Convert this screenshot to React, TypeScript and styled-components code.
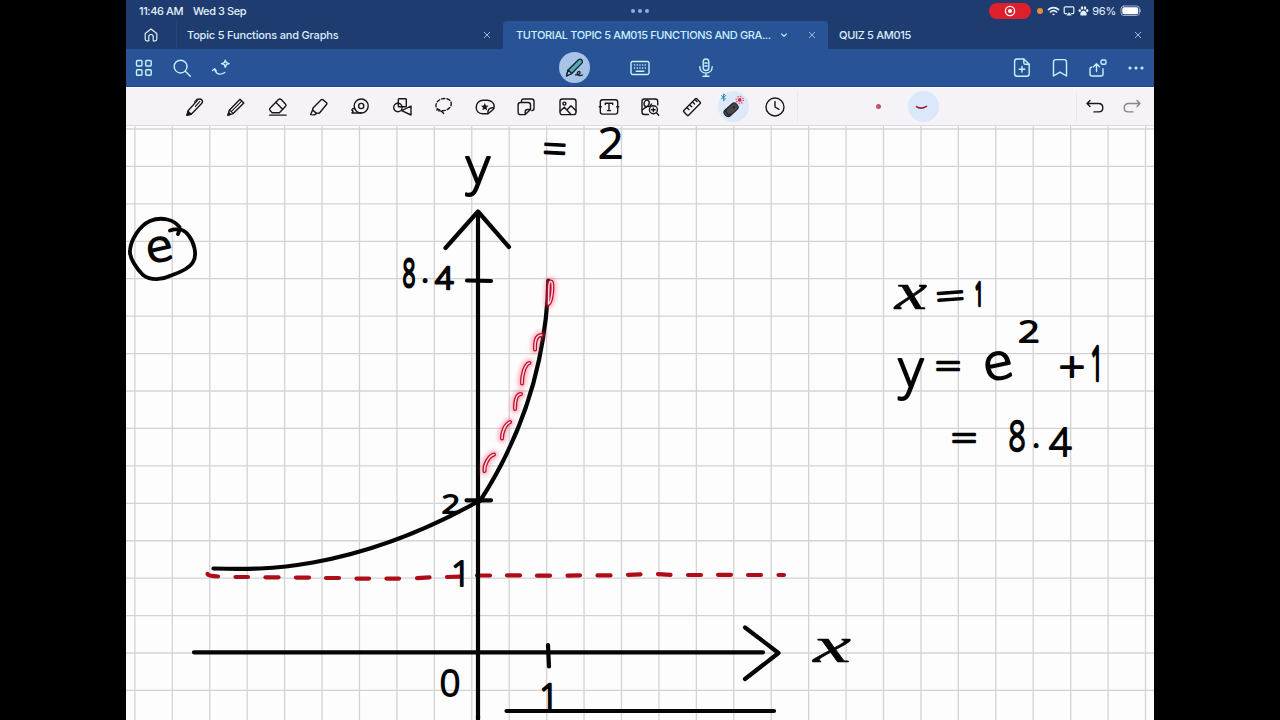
import React from "react";
import styled, { createGlobalStyle } from "styled-components";

const GlobalStyle = createGlobalStyle`
  * { box-sizing: border-box; }
  body { margin: 0; background: #000; overflow: hidden; }
`;

const Page = styled.div`
  height: 720px;
  background: #000;
  display: flex;
  justify-content: center;
  font-family: Inter, "Liberation Sans", sans-serif;
`;

const Tablet = styled.div`
  width: 1028px;
  height: 720px;
  display: flex;
  flex-direction: column;
  background: #fdfdfe;
`;

const StatusBar = styled.header`
  height: 21px;
  flex: none;
  background: #1f3c70;
  color: #e4f1fc;
  display: grid;
  grid-template-columns: 1fr auto 1fr;
  align-items: center;
  padding: 0 13px;
  font-size: 11px;
  font-weight: 500;
`;

const Clock = styled.div`
  display: flex;
  gap: 10px;
  white-space: nowrap;
  letter-spacing: -0.42px;
`;

const Dots = styled.div`
  display: flex;
  gap: 3px;
`;

const Dot = styled.span<{ $size: number; $color: string }>`
  width: ${(p) => p.$size}px;
  height: ${(p) => p.$size}px;
  border-radius: 50%;
  background: ${(p) => p.$color};
`;

const StatusIcons = styled.div`
  display: flex;
  align-items: center;
  justify-content: flex-end;
  font-weight: 400;
`;

const Percent = styled.span`
  letter-spacing: -0.2px;
`;

const RecordPill = styled.div`
  width: 42px;
  height: 16px;
  border-radius: 8px;
  background: #de1f2c;
  display: flex;
  align-items: center;
  justify-content: center;
  margin-right: 6px;
`;

const TabBar = styled.nav`
  height: 28px;
  flex: none;
  background: #1f3c70;
  display: flex;
  color: #dbeefb;
`;

const HomeTab = styled.div`
  width: 51px;
  padding-right: 1px;
  border-right: 1px solid #27457a;
  display: flex;
  align-items: center;
  justify-content: center;
`;

const Tab = styled.div<{ $width: number; $active?: boolean }>`
  width: ${(p) => p.$width}px;
  display: flex;
  align-items: center;
  padding: 0 12px 0 ${(p) => (p.$active ? 13 : 10)}px;
  border-radius: 4px 4px 0 0;
  background: ${(p) => (p.$active ? "#285397" : "transparent")};
  color: ${(p) => (p.$active ? "#c9f0fd" : "inherit")};
  font-size: 11px;
  font-weight: 500;
`;

const TabTitle = styled.span<{ $tracking: number; $indent?: number }>`
  white-space: nowrap;
  margin-left: ${(p) => p.$indent ?? 0}px;
  margin-right: auto;
  letter-spacing: ${(p) => p.$tracking}px;
`;

const TabActions = styled.div`
  display: flex;
  gap: 20px;
`;

const NavBar = styled.div`
  height: 38px;
  flex: none;
  background: #285397;
  border-bottom: 1px solid #1f4380;
  display: grid;
  grid-template-columns: 1fr auto 1fr;
  align-items: center;
  color: #c9f0fd;
`;

const NavGroup = styled.div<{ $gap: number; $end?: boolean }>`
  display: flex;
  align-items: center;
  gap: ${(p) => p.$gap}px;
  justify-content: ${(p) => (p.$end ? "flex-end" : "flex-start")};
  padding: ${(p) => (p.$end ? "0 7px 0 0" : "0 0 0 7px")};
`;

const ModeGroup = styled.div`
  display: flex;
  align-items: center;
  gap: 34.5px;
`;

const RoundButton = styled.div<{ $color?: string }>`
  width: 31px;
  height: 31px;
  border-radius: 50%;
  background: ${(p) => p.$color ?? "transparent"};
  display: flex;
  align-items: center;
  justify-content: center;
`;

const ToolBar = styled.div`
  height: 39px;
  flex: none;
  background: #f5f3f8;
  border-top: 1px solid #fdfdff;
  border-bottom: 1px solid #dcdbe0;
  display: flex;
  align-items: center;
  color: #17171a;
`;

const ToolList = styled.div`
  display: flex;
  padding-left: 48px;
  width: 671px;
`;

const Tool = styled.div`
  width: 41.43px;
  flex: none;
  display: flex;
  justify-content: center;
  align-items: center;
`;

const Divider = styled.span`
  width: 1px;
  height: 30px;
  background: #eae8ef;
`;

const Swatches = styled.div`
  width: 278px;
  display: flex;
  align-items: center;
  padding-left: 78px;
  gap: 27px;
`;

const History = styled.div`
  display: flex;
  align-items: center;
  padding-left: 7px;
  gap: 15px;
`;

const Canvas = styled.main`
  flex: 1;
  min-height: 0;
  svg { display: block; overflow: visible; }
`;

type IconProps = { children: React.ReactNode; w?: number; h?: number; sw?: number; color?: string };

/* Line icon drawn on a grid of w by h units, one unit per pixel. */
const Icon = ({ children, w = 22, h = 22, sw = 1.4, color = "currentColor" }: IconProps) => (
  <svg width={w} height={h} viewBox={`0 0 ${w} ${h}`} fill="none" stroke={color}
    strokeWidth={sw} strokeLinecap="round" strokeLinejoin="round">
    {children}
  </svg>
);

const CloseIcon = () => (
  <Icon w={8} h={8} sw={0.9} color="#a9c6ea"><path d="M1.3 1.3l5.400 5.400M6.700 1.300L1.300 6.700" /></Icon>
);

const tools: React.ReactNode[] = [
  <><path d="M3 19.200l1.300-4.700L13.800 3.900c1-1.100 2.800-1.200 3.800-.2s1 2.700 0 3.700L8 17.400z" /><path d="M10.600 6.200l2.700-3.300M15.700 5.700l-4.300 4.600" strokeWidth="1.200" /><path d="M3 19.200l1-3.900 3.300 2.900z" fill="currentColor" /></>,
  <><path d="M3 19.200l1.300-5L15 3.200l3.800 3.700L8.200 17.600z" /><path d="M4.600 14.200l3.500 3.200M6.500 15.400L16.700 5.200" strokeWidth="1.100" /><path d="M3 19.200l.7-2.600 1.800 1.800z" fill="currentColor" /></>,
  <><path d="M5.200 16.700l-2-2c-.8-.8-.8-1.800 0-2.600l8.300-8.500c.8-.8 1.900-.8 2.700 0l4.200 4.300c.8.8.8 1.800 0 2.600l-6 6.200z" /><path d="M8.800 6.300l6.800 7" /><path d="M2.600 19.100h16.600" /></>,
  <><path d="M5 12l8.200-8.200c.5-.5 1-.5 1.500-.2l3.900 3.200c.5.4.5.9.1 1.400L11.500 17l-3 .4L4.600 14z" /><path d="M4.700 13.800l-2 4.800 3.700.3 2.200-1.500" /></>,
  <><circle cx="12.200" cy="10" r="7" /><circle cx="12.200" cy="10" r="2.600" /><path d="M12.200 17H3l1.200-1.800-1.400-1.300 1.300-1.500 1.300.3" /></>,
  <><rect x="7.300" y="2.800" width="8" height="8" rx=".8" /><circle cx="6.900" cy="11.500" r="4.200" /><path d="M20 10v9l-9.300-4.300z" /></>,
  <><ellipse cx="11.600" cy="8.600" rx="7.800" ry="6" strokeDasharray="3.200 2.100" transform="rotate(-15 11.600 8.600)" /><path d="M4.800 14c1.200-1.400 3-.3 2.200 1.100 2.200-.6 3.800 1 5.600 3.600" strokeDasharray="3.800 1.800" /></>,
  <><path d="M14 17.800H8.500c-4 0-6.300-2.800-6.300-6.800s3.200-6.700 7-6.700h4c3.800 0 7 2.500 7 6.200 0 1.400-.6 2.500-1.600 3.500L14 17.800z" /><path d="M14 17.600c-.6-3.500 1.200-6.400 5.800-5.700" /><path d="M10.800 7l1.100 2.500 2.700.3-2 1.800.6 2.700-2.400-1.400-2.400 1.400.6-2.700-2-1.800 2.700-.3z" fill="currentColor" stroke="none" /></>,
  <><path d="M6.500 6V5.300C6.500 3.900 7.400 3 8.800 3h7.800C18 3 19 3.900 19 5.300v7c0 1.200-1 2.200-2.200 2.300" /><path d="M10.200 18.600H5.600c-1.500 0-2.500-.9-2.500-2.400V9c0-1.500 1-2.500 2.500-2.500H13c1.500 0 2.500 1 2.500 2.500v4.600z" /><path d="M10.200 18.300v-2.500c0-1.500.8-2.300 2.300-2.300h2.800" /></>,
  <><rect x="3" y="3" width="16" height="15.600" rx="2.400" /><circle cx="7.400" cy="7.600" r="1.500" /><path d="M3.300 15l4-3.800 6.500 7M9.800 14l4.200-4.300 5 5" /></>,
  <><path d="M2.300 8.500V6c0-1.500.8-2.300 2.300-2.300h12.800c1.500 0 2.300.8 2.300 2.300v2.500M2.300 13v2.800c0 1.500.8 2.300 2.300 2.300h12.800c1.500 0 2.300-.8 2.300-2.300V13M1.300 10.800h2M18.700 10.800h2M2.300 8.500V13M19.700 8.500V13" /><path d="M7.300 8.600V7.200h7.400v1.400M11 7.200v7.400M9.400 14.600h3.200" /></>,
  <><path d="M18.700 9V5.400c0-1.500-1-2.400-2.500-2.400H5.400C3.900 3 3 3.900 3 5.400V16c0 1.500.9 2.500 2.400 2.500h4" /><ellipse cx="7.600" cy="7.400" rx="2.500" ry="3.300" transform="rotate(20 7.600 7.400)" /><path d="M3.200 14l4.400-3.400c1.500-1 2 .7 3-.3l2-2.200" /><circle cx="14.400" cy="13.800" r="4" /><path d="M17.400 16.800l2.300 2.400M14.400 12v3.600M12.600 13.800h3.600" /></>,
  <><rect x="1.800" y="7.600" width="18.400" height="6.800" rx="1" transform="rotate(-45 11 11)" /><path d="M6 11.700l1.900 1.900M8.800 8.900l1.900 1.900M11.600 6.100l1.900 1.900M14.400 3.900l1.600 1.600" /></>,
];

const Laser = () => (
  <Icon w={31} h={31} sw={1.2}>
    <g transform="rotate(-42 14 18)"><rect x="5" y="14.200" width="15.500" height="7.600" rx="3.200" fill="#46484e" stroke="#222429" /><path d="M9 14.400c-1.800 2-1.800 5 0 7.200" stroke="#222429" /><circle cx="16.500" cy="18" r="1.100" fill="#222" stroke="none" /></g>
    <path d="M3.400 4.600l4.200 3.200-2.100 1.900V2.800l2.100 1.800-4.200 3.200" stroke="#2386b8" strokeWidth=".9" />
    <circle cx="21.800" cy="8.900" r="1.900" fill="#d92846" stroke="none" />
    <circle cx="21.800" cy="8.900" r="3.500" stroke="#d92846" strokeWidth="1.500" strokeDasharray="1 1.750" strokeLinecap="butt" />
  </Icon>
);

/* Handwritten characters: centre x, baseline y, font size, stretch k, rotation r, stroke w. */
type Mark = { t: string; x: number; y: number; s: number; k?: number; it?: boolean; w?: number; r?: number };
const marks: Mark[] = [
  { t: "=", x: 554, y: 163, s: 40, k: 1.05, r: 3 },
  { t: "2", x: 611, y: 158, s: 43, k: 1.05 },
  { t: "y", x: 478, y: 184, s: 52 },
  { t: "e", x: 162, y: 261, s: 44, k: 1.1, r: -12 },
  { t: "8", x: 409, y: 287, s: 38, k: 0.6, w: 3 },
  { t: ".", x: 425, y: 282, s: 30, w: 2.5 },
  { t: "4", x: 444, y: 289, s: 32, k: 1, w: 2.4 },
  { t: "2", x: 451, y: 513, s: 26, k: 1.25 },
  { t: "1", x: 461, y: 586, s: 34, k: 1 },
  { t: "0", x: 450, y: 696, s: 36, k: 1 },
  { t: "1", x: 549, y: 710, s: 36, k: 0.9, w: 2.4 },
  { t: "x", x: 832, y: 662, s: 50, k: 1.7, it: true, w: 0.5 },
  { t: "x", x: 911, y: 309, s: 52, k: 1.4, it: true, w: 0.6 },
  { t: "=", x: 951, y: 308, s: 34, k: 1.5, r: -4 },
  { t: "1", x: 979, y: 305, s: 32, k: 0.45, w: 4.5 },
  { t: "y", x: 911, y: 387, s: 54, k: 1 },
  { t: "=", x: 948, y: 378, s: 34, k: 1.35 },
  { t: "e", x: 1001, y: 379, s: 50, k: 1.08, r: -12 },
  { t: "2", x: 1029, y: 342, s: 29, k: 1.3 },
  { t: "+", x: 1072, y: 382, s: 42, k: 1.1 },
  { t: "1", x: 1097, y: 380, s: 46, k: 0.45, w: 4.5 },
  { t: "=", x: 964, y: 450, s: 34, k: 1.35 },
  { t: "8", x: 1017, y: 451, s: 43, k: 0.7, w: 2.6 },
  { t: ".", x: 1036, y: 447, s: 30, w: 2.5 },
  { t: "4", x: 1060, y: 456, s: 39, k: 1 },
];

const InkChar = styled.text<{ $size: number; $serif?: boolean }>`
  font-family: ${(p) => (p.$serif ? '"Liberation Serif", serif' : '"Open Sans", sans-serif')};
  font-style: ${(p) => (p.$serif ? "italic" : "normal")};
  font-weight: 300;
  font-size: ${(p) => p.$size}px;
  text-anchor: middle;
  fill: #050505;
  stroke: #050505;
  stroke-linejoin: round;
`;

const columns = Array.from({ length: 28 }, (_, i) => 134.9 + i * 37.43);
const rows = Array.from({ length: 16 }, (_, i) => 129 + i * 37.43);

const dashes = [
  "M207.500 574q1 2 10.500 2.500", "M235.500 577h12.500", "M265.500 577.300h13", "M296 577.600h13", "M326 578h13", "M356.500 578.600h12.500",
  "M386.500 578.600h12.500", "M417 578.200l12.500-.8", "M447 577l13-.4", "M477 575.500h13", "M507 575.400h13", "M537 575.700h13",
  "M567.500 575.700l12.500-.4", "M597.500 575.400h13", "M628 574.800l12.500-.4", "M658 574.200l12.500.7", "M688 575h13", "M718 574.800h13",
  "M748 575h13", "M778.500 575h5.500",
];

const laserMarks = [
  "M484.500 471c-.5-6 4-15 9.500-16.500",
  "M502 438.500c0-7 3-14 8-16.500",
  "M515 409c0-8 1.500-15 6-15",
  "M522 383.500c-.3-8 3-20 7.500-20.500",
  "M535 349.500c0-8 .5-14 6.500-14.500",
  "M548.500 304c4-3 5-23 2.500-22.500-3-1-2 12-2.500 22.500",
];

const Notes = () => (
  <svg width="1028" height="594" viewBox="126 126 1028 594">
    <g stroke="#d3d3d6" strokeWidth="1.300">
      {columns.map((x) => <path key={x} d={`M${x} 126V720`} />)}
      {rows.map((y) => <path key={y} d={`M126 ${y}H1154`} />)}
    </g>
    <g fill="none" stroke="#ad0c18" strokeWidth="4.200" strokeLinecap="round">
      {dashes.map((d) => <path key={d} d={d} />)}
    </g>
    <g fill="none" stroke="#050505" strokeWidth="4.200" strokeLinecap="round" strokeLinejoin="round">
      <path d="M478 718V212M445.500 248L478 211.500 509 247" />
      <path d="M478 716v4" strokeLinecap="butt" />
      <path d="M467 280.500L491 281M466.500 500.300H491" />
      <path d="M194 652.300H763M745 627.500L778.500 653 745 679M548 645l1 21.500M506.500 711H774" />
      <path d="M213.500 568.500C244 569.500 273 569.500 313 562.500 371 552 427 530 478 501.500" />
      <path d="M480 501C509 456 528 412 539 360 545 331 548 307 548.300 280.500" />
      <path d="M179.500 227C174 220 162 216 150 221 139 226 131 240 130 250 129 258 137 269 143 275 151 281 162 280 171 275.500 181 272 190 268 193 262 198 254 193 241 189 236 185 230 180 227 170 230.500M180 229L178 234" strokeWidth="3.800" />
    </g>
    {marks.map((m, i) => (
      <InkChar key={i} $size={m.s} $serif={m.it} strokeWidth={m.w ?? 2}
        transform={`translate(${m.x} ${m.y}) rotate(${m.r ?? 0}) scale(${m.k ?? 1} 1)`}>
        {m.t}
      </InkChar>
    ))}
    <g fill="none" strokeLinecap="round" strokeLinejoin="round">
      <g stroke="#ff4668" strokeWidth="8" opacity=".45" filter="url(#glow)">
        {laserMarks.map((d) => <path key={d} d={d} />)}
      </g>
      <g stroke="#b90d2d" strokeWidth="4">{laserMarks.map((d) => <path key={d} d={d} />)}</g>
      <g stroke="#ffd5de" strokeWidth="1.500">{laserMarks.map((d) => <path key={d} d={d} />)}</g>
    </g>
    <defs><filter id="glow"><feGaussianBlur stdDeviation="2" /></filter></defs>
  </svg>
);

export default function App() {
  return (
    <Page>
      <GlobalStyle />
      <Tablet>
        <StatusBar>
          <Clock><span>11:46 AM</span><span>Wed 3 Sep</span></Clock>
          <Dots>{[0, 1, 2].map((i) => <Dot key={i} $size={4} $color="#8dafe5" />)}</Dots>
          <StatusIcons>
            <RecordPill>
              <Icon w={12} h={12} sw={1.3} color="#fff"><circle cx="6" cy="6" r="4.600" /><circle cx="6" cy="6" r="2.100" fill="#fff" stroke="none" /></Icon>
            </RecordPill>
            <Dot $size={6} $color="#e38f35" />
            <Icon w={20} h={12} sw={1.700}><path d="M5.500 4.700c2.700-2.900 7.300-2.900 10 0M7.500 7c1.700-1.800 4.300-1.800 6 0" /><path d="M9 8.900c.9-.7 2.100-.7 3 0l-1.500 1.500z" fill="currentColor" stroke="none" /></Icon>
            <Icon w={12} h={12} sw={1.200}><path d="M3.600 8.700H2.300c-.7 0-1.100-.4-1.100-1.100V3c0-.7.400-1.100 1.100-1.100h7.400c.7 0 1.100.4 1.100 1.100v4.600c0 .7-.4 1.100-1.100 1.100H8.400" /><path d="M6 7.300l2.600 3.200H3.400z" fill="currentColor" stroke="none" /></Icon>
            <Icon w={17} h={12} sw={0}><g fill="currentColor"><ellipse cx="4.800" cy="5.500" rx="1.200" ry="1.600" /><ellipse cx="7" cy="3" rx="1.200" ry="1.700" /><ellipse cx="10" cy="3" rx="1.200" ry="1.700" /><ellipse cx="12.200" cy="5.500" rx="1.200" ry="1.600" /><path d="M8.500 5.600c1.700 0 3.400 2.300 3.200 3.800-.2 1.600-2 1-3.200 1s-3 .6-3.200-1c-.2-1.500 1.500-3.800 3.200-3.800z" /></g></Icon>
            <Percent>96%</Percent>
            <Icon w={25} h={12} sw={0.900}><rect x="5" y="1" width="18.500" height="9.500" rx="2.800" stroke="#a5b8d7" /><rect x="6.300" y="2.300" width="15.900" height="6.900" rx="1.600" fill="#fff" stroke="none" /><path d="M24.600 4.800v2" stroke="#8da5cb" /></Icon>
          </StatusIcons>
        </StatusBar>
        <TabBar>
          <HomeTab>
            <Icon w={16} h={16} sw={1.200}><path d="M2.200 6.500L8 2l5.800 4.500v5.800c0 .8-.6 1.500-1.500 1.500H10.200V9.600c0-2.800-4.400-2.800-4.400 0v4.200H3.700c-.9 0-1.500-.7-1.500-1.500z" /></Icon>
          </HomeTab>
          <Tab $width={326}><TabTitle $tracking={-0.18}>Topic 5 Functions and Graphs</TabTitle><CloseIcon /></Tab>
          <Tab $width={325} $active>
            <TabTitle $tracking={-0.38}>TUTORIAL TOPIC 5 AM015 FUNCTIONS AND GRA...</TabTitle>
            <TabActions>
              <Icon w={8} h={8} sw={1.100}><path d="M1.500 2.800L4 5.300l2.500-2.500" /></Icon>
              <CloseIcon />
            </TabActions>
          </Tab>
          <Tab $width={326}><TabTitle $tracking={-0.3} $indent={1}>QUIZ 5 AM015</TabTitle><CloseIcon /></Tab>
        </TabBar>
        <NavBar>
          <NavGroup $gap={16}>
            <Icon><rect x="3.500" y="3.500" width="5.500" height="5.500" rx="1" /><rect x="12.700" y="3.500" width="5.500" height="5.500" rx="1" /><rect x="3.500" y="12.700" width="5.500" height="5.500" rx="1" /><rect x="12.700" y="12.700" width="5.500" height="5.500" rx="1" /></Icon>
            <Icon><circle cx="9.600" cy="9.600" r="6.400" /><path d="M14.300 14.300l5 5" /></Icon>
            <Icon w={24}><path d="M3.500 13.500l2.200-1.700 1.600 2.200M5.700 12.200c1 5 5.500 6.300 10 3.300" /><path d="M16.300 3.200l1 2.500 2.700 1-2.700 1-1 2.600-1-2.600-2.700-1 2.700-1z" /></Icon>
          </NavGroup>
          <ModeGroup>
            <RoundButton $color="#a8c2e8">
              <Icon w={24} h={24} sw={1.300} color="#12232d"><path d="M3.500 20l1.600-6L15.200 4c1-1 2.500-1 3.500 0s1 2.400 0 3.400L8.800 17.500z" fill="#55a8b5" /><path d="M5.100 14l3.700 3.500L3.500 20z" fill="#a8c2e8" /><path d="M12.500 18.800c2.400.6 5-.8 4.500-2.600-.5-1.300-2.800-.6-2.800 1.200 0 2.200 2.600 2.600 5.300 1.600" /></Icon>
            </RoundButton>
            <RoundButton>
              <Icon><rect x="2" y="4.500" width="18" height="13" rx="1.700" /><path d="M5.500 8h.1M8.200 8h.1M10.900 8h.1M13.600 8h.1M16.300 8h.1M5.500 10.900h.1M8.200 10.900h.1M10.900 10.900h.1M13.600 10.900h.1M16.300 10.900h.1M7.300 14.300h7.400" strokeWidth="1.500" /></Icon>
            </RoundButton>
            <RoundButton>
              <Icon><rect x="8.200" y="2" width="5.600" height="11.500" rx="2.800" /><path d="M4.800 9.800c0 8.400 12.400 8.400 12.400 0M11 16.200v3M8 19.300h6M9.800 6h2.400M9.800 9h2.400" /></Icon>
            </RoundButton>
          </ModeGroup>
          <NavGroup $gap={16} $end>
            <Icon><path d="M5.800 2h7l5.400 5.300v9.500c0 1.500-1 2.500-2.500 2.500H6c-1.500 0-2.400-1-2.400-2.500V4.500C3.600 3 4.500 2 5.800 2z" /><path d="M12.800 2.200v3.500c0 1 .6 1.600 1.600 1.600h3.500M11 9.500v5.600M8.200 12.300h5.600" /></Icon>
            <Icon><path d="M4.500 19V5c0-1.500.9-2.400 2.400-2.400h8.200c1.500 0 2.400.9 2.400 2.400v14L11 15.200z" /></Icon>
            <Icon><path d="M4.800 10.200H4.500c-1 0-1.500.6-1.500 1.500V17c0 1.300.8 2 2 2h9c1.200 0 2-.7 2-2v-5.300M9.500 14.500V7M6.500 9.700l3-3 3 3" /><rect x="14" y="3" width="5" height="4.200" rx="1.500" /></Icon>
            <Icon><g fill="currentColor" stroke="none"><circle cx="5" cy="11" r="1.500" /><circle cx="11" cy="11" r="1.500" /><circle cx="17" cy="11" r="1.500" /></g></Icon>
          </NavGroup>
        </NavBar>
        <ToolBar>
          <ToolList>
            {tools.map((shape, i) => <Tool key={i}><Icon>{shape}</Icon></Tool>)}
            <Tool><RoundButton $color="#dde8f9"><Laser /></RoundButton></Tool>
            <Tool><Icon><circle cx="11" cy="11" r="9" /><path d="M11 5.500V11l4 2.400" /></Icon></Tool>
          </ToolList>
          <Divider />
          <Swatches>
            <Dot $size={5} $color="#c55366" />
            <RoundButton $color="#dbe7fa"><Icon w={18} h={8} sw={1.500} color="#991b35"><path d="M1.500 3.600c2.500 2 5 2.600 10-.3" /></Icon></RoundButton>
          </Swatches>
          <Divider />
          <History>
            <Icon><path d="M6 4.500L3 7.500l3 3M3.300 7.500h11.200c2.600 0 4.300 1.700 4.300 4.200s-1.700 4.200-4.300 4.200H10" /></Icon>
            <Icon color="#85858b"><path d="M16 4.500l3 3-3 3M18.700 7.500H7.500c-2.600 0-4.300 1.700-4.300 4.200s1.700 4.200 4.300 4.200H12" /></Icon>
          </History>
        </ToolBar>
        <Canvas><Notes /></Canvas>
      </Tablet>
    </Page>
  );
}
